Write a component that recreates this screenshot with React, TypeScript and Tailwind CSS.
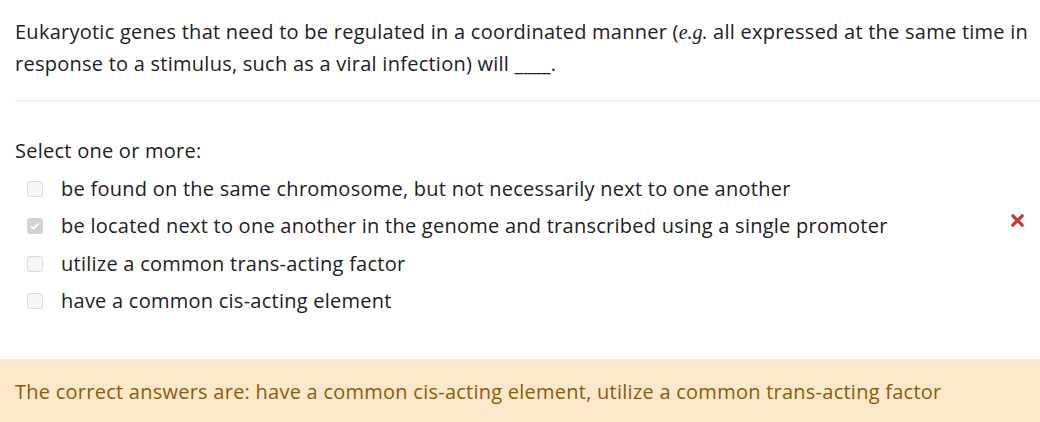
import React from "react";

const options = [
    { text: "be found on the same chromosome, but not necessarily next to one another", checked: false, wrong: false },
    { text: "be located next to one another in the genome and transcribed using a single promoter", checked: true, wrong: true },
    { text: "utilize a common trans-acting factor", checked: false, wrong: false },
    { text: "have a common cis-acting element", checked: false, wrong: false },
];

function Box({ checked }: { checked: boolean }): JSX.Element {
    if (checked) {
        return (
            <div className="w-4 h-4 rounded-[3px] bg-[#d3d3d3] flex items-center justify-center">
                <svg viewBox="0 0 16 16" className="w-3 h-3">
                    <path d="M3 8.5l3 3 7-7" stroke="#fff" strokeWidth="2.2" fill="none" />
                </svg>
            </div>
        );
    }
    return <div className="w-4 h-4 rounded-[3px] border border-[#dcdcdc] bg-[#f7f7f7]"></div>;
}

export default function App(): JSX.Element {
    return (
        <div className="w-[1040px] h-[422px] overflow-hidden bg-white text-[#1d2125] text-[20px] leading-[32px] font-['Open_Sans',sans-serif] tracking-[0.25px]">
            <div className="pl-[15px] pt-[16px]">
                <p className="pr-[8px]">
                    Eukaryotic genes that need to be regulated in a coordinated manner (
                    <i className="font-['Liberation_Serif',serif] tracking-normal">e.g.</i> all expressed at the same
                    time in response to a stimulus, such as a viral infection) will ____.
                </p>
                <div className="mt-[20px] border-t border-[#e8e8e8]"></div>
                <div className="pt-[34px]">Select one or more:</div>
                <div className="flex flex-col pt-[3px]">
                    {options.map((o, key) => (
                        <div key={key} className="flex items-center h-[37.5px] pl-[12px]">
                            <Box checked={o.checked} />
                            <span className="ml-[18px]">{o.text}</span>
                            {o.wrong && (
                                <svg viewBox="0 0 16 16" className="w-[15px] h-[15px] ml-auto mr-[15px] -translate-y-[6px]">
                                    <path d="M3 3l10 10M13 3L3 13" stroke="#c53a37" strokeWidth="3.4" strokeLinecap="round" />
                                </svg>
                            )}
                        </div>
                    ))}
                </div>
            </div>
            <div className="mt-[39px] bg-[#fde8cc] text-[#8d5c02] pl-[15px] pt-[17px] pb-[20px]">
                The correct answers are: have a common cis-acting element, utilize a common trans-acting factor
            </div>
        </div>
    );
}
